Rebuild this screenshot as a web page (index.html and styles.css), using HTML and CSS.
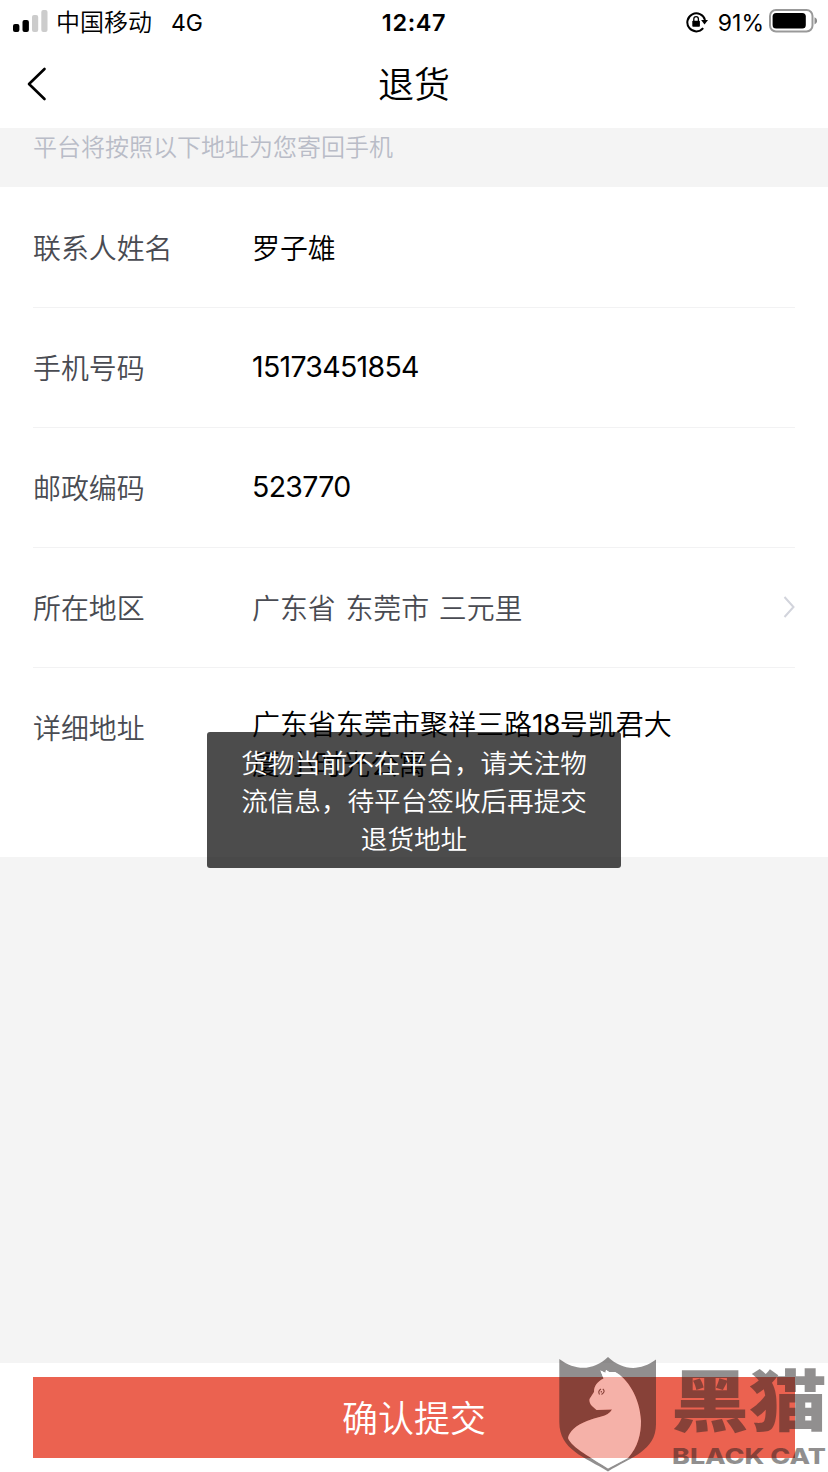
FILE: index.html
```html
<!DOCTYPE html>
<html lang="zh-CN">
<head>
<meta charset="utf-8">
<title>退货</title>
<link rel="stylesheet" href="styles.css">
</head>
<body>
<div class="screen">
  <header class="status">
    <div class="status-left">
      <svg class="signal" width="35" height="22" viewBox="0 0 35 22"><rect x="0" y="14" width="6.4" height="8" rx="2"/><rect x="9.5" y="10" width="6.4" height="12" rx="2"/><rect class="dim" x="19" y="5" width="6.2" height="17" rx="2"/><rect class="dim" x="28.3" y="0" width="6.2" height="22" rx="2"/></svg>
      <span class="carrier">中国移动</span>
      <span class="network">4G</span>
    </div>
    <span class="clock">12:47</span>
    <div class="status-right">
      <svg width="22" height="22" viewBox="0 0 22 22"><path d="M17.2 17.2A9 9 0 1 1 19 9" fill="none" stroke="#000" stroke-width="2"/><path d="M15.1 9H22l-3.500 4.500z"/><rect x="6.300" y="9.800" width="7.600" height="6" rx=".8"/><path d="M7.800 10V8a2.300 2.300 0 0 1 4.600 0v2" fill="none" stroke="#000" stroke-width="1.300"/></svg>
      <span class="percent">91%</span>
      <svg class="battery" width="48" height="24" viewBox="0 0 48 24"><rect x="1" y="1" width="42.500" height="21.500" rx="6" fill="#fff" stroke="#999" stroke-width="2"/><rect x="3.600" y="4" width="33.200" height="15.500" rx="3.500"/><path d="M45.500 8.300q2.700 1.200 2.700 3.600t-2.700 3.600z" fill="#8c8c8c"/></svg>
    </div>
  </header>
  <nav class="navbar">
    <svg class="back" width="20" height="34" viewBox="0 0 20 34"><path d="M17.500 2 2 17l15.500 15" fill="none" stroke="#000" stroke-width="2.600" stroke-linecap="round" stroke-linejoin="round"/></svg>
    <h1 class="title">退货</h1>
  </nav>
  <p class="notice">平台将按照以下地址为您寄回手机</p>
  <main class="form">
    <div class="row"><span class="label">联系人姓名</span><span class="value">罗子雄</span></div>
    <div class="row"><span class="label">手机号码</span><span class="value number">15173451854</span></div>
    <div class="row"><span class="label">邮政编码</span><span class="value number">523770</span></div>
    <div class="row"><span class="label">所在地区</span><span class="value region">广东省 东莞市 三元里</span>
      <svg width="12" height="22" viewBox="0 0 12 22"><path d="M1.500 1 10.500 11l-9 10" fill="none" stroke="#d2d4dc" stroke-width="2"/></svg>
    </div>
    <div class="row address-row"><span class="label">详细地址</span><span class="value address">广东省东莞市聚祥三路<span class="number">18</span>号凯君大<br>厦 小时光公寓</span></div>
  </main>
  <div class="space"></div>
  <footer class="footer"><button class="submit">确认提交</button></footer>
  <div class="toast">货物当前不在平台，请关注物<br>流信息，待平台签收后再提交<br>退货地址</div>
  <svg class="watermark" width="280" height="122" viewBox="0 0 280 122">
    <path class="mark" fill-rule="evenodd" d="M11.300 9C29 22 46 20 60 7 74 20 91 22 108 9.500V74C108 101 83 107 60 121.500 37 107 11.300 100 11.300 72ZM20 88C24 98 44 108 60 118.500L80 108C90 97 93 84 93 71 92 47 79 28 67 22L61 22 58 20 57.500 23 52.500 20.500 55.500 28.500C49 32 46 36 46 42L41.500 49Q41 53 44 56L48.500 60 64 59.500C60 67 48 67 39 71 28 75 21 82 20 88Z"/>
    <path class="cat" d="M20 88C24 98 44 108 60 118.500L80 108C90 97 93 84 93 71 92 47 79 28 67 22L61 22 58 20 57.500 23 52.500 20.500 55.500 28.500C49 32 46 36 46 42L41.500 49Q41 53 44 56L48.500 60 64 59.500C60 67 48 67 39 71 28 75 21 82 20 88Z"/>
    <path class="ear" d="M52.500 20.500 57.500 23 58 20 61 22 67 22 71 26.500H55z"/>
    <path d="M53 39Q49.500 41 51.500 44.500M54.800 39Q58 41.500 53.500 44.500M53.300 41v1.500" fill="none" stroke="#873f37" stroke-width="1.100"/>
    <text class="mark brand" x="123" y="75.500" textLength="156" lengthAdjust="spacingAndGlyphs">黑猫</text>
    <text class="mark brand-en" x="124" y="114" textLength="154" lengthAdjust="spacingAndGlyphs">BLACK CAT</text>
  </svg>
</div>
</body>
</html>
```
FILE: styles.css
```css
* { box-sizing: border-box; }
body { margin: 0; background: #fff; font-family: "Noto Sans CJK SC", sans-serif; color: #000; }
.screen { position: relative; width: 828px; height: 1472px; display: flex; flex-direction: column; overflow: hidden; }
.status { height: 40px; display: grid; grid-template-columns: 1fr auto 1fr; align-items: center; padding: 0 11px 0 13px; font-family: Inter, "Noto Sans CJK SC", sans-serif; font-size: 23px; line-height: 40px; }
.status-left, .status-right { display: flex; align-items: center; }
.status-right { justify-content: flex-end; }
.signal { margin-bottom: 2px; }
.signal .dim { fill: #ccc; }
.carrier { margin-left: 8px; padding-top: 3px; font-size: 24px; font-weight: 350; }
.network { margin-left: 19px; padding-top: 2px; }
.clock { font-size: 23.500px; font-weight: 600; letter-spacing: .6px; padding-top: 2px; margin-left: -2px; }
.percent { margin: 2px 5px 0 10px; }
.battery { margin-bottom: 1px; }
.navbar { height: 88px; display: grid; grid-template-columns: 60px 1fr 60px; align-items: center; }
.back { margin-left: 27px; }
.title { margin: 0; font-size: 36px; font-weight: 350; line-height: 84px; padding-bottom: 4px; text-align: center; }
.notice { margin: 0; height: 59px; padding-left: 33px; background: #f4f4f4; color: #b9bcc7; font-size: 24px; font-weight: 350; line-height: 35px; }
.form { height: 670px; padding: 0 33px; font-weight: 350; }
.row { height: 120px; display: flex; align-items: center; padding-bottom: 1px; box-shadow: 0 1px #f2f2f3; font-size: 27.900px; line-height: 40px; }
.label { width: 219px; color: #494b52; }
.value { flex: 1; }
.number { font-family: Inter, sans-serif; font-size: 28.500px; font-weight: 400; letter-spacing: -.7px; line-height: 1; }
.row > .number { padding-top: 2px; }
.row > svg { margin-top: 1px; }
.region { color: #494b52; word-spacing: 3.500px; }
.address-row { height: 190px; align-items: flex-start; box-shadow: none; padding-top: 36px; }
.address-row .label { padding-top: 4px; }
.address { font-size: 28px; }
.space { flex: 1; background: #f4f4f4; }
.footer { height: 109px; padding: 14px 33px; }
.submit { display: block; width: 100%; height: 81px; padding: 0 0 2px; border: 0; background: #eb6250; color: #fff; font-family: inherit; font-size: 36px; font-weight: 350; line-height: 79px; }
.toast { position: absolute; left: 207px; top: 732px; width: 414px; height: 136px; padding-top: 11px; border-radius: 3px; background: rgba(0, 0, 0, .7); color: #fff; font-size: 26.600px; font-weight: 350; line-height: 38px; text-align: center; white-space: nowrap; }
.watermark { position: absolute; left: 548px; top: 1350px; overflow: visible; }
.mark { fill: rgba(35, 31, 32, .5); }
.cat { fill: rgba(255, 255, 255, .5); }
.ear { fill: #fff; }
.brand { font-size: 67px; font-weight: 900; }
.brand-en { font-family: Inter, sans-serif; font-size: 22px; font-weight: 800; }
```
